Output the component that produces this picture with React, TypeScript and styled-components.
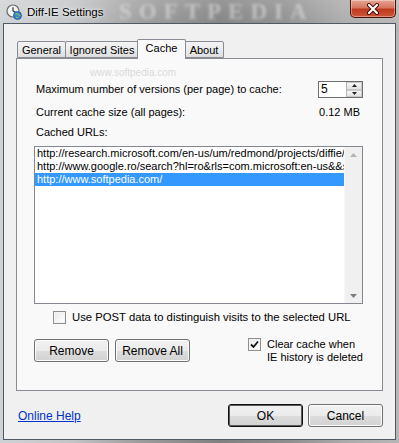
import styled, { createGlobalStyle } from "styled-components";

const GlobalStyle = createGlobalStyle`
  html, body { margin: 0; padding: 0; background: #9a9a9a; }
  body {
    font-family: "Liberation Sans", Arial, sans-serif;
    font-size: 11px;
    color: #000;
  }
  #root { width: 399px; height: 443px; }
`;

const Frame = styled.div`
  width: 399px;
  height: 443px;
  box-sizing: border-box;
  padding: 0 3px 3px 3px;
  display: flex;
  flex-direction: column;
  overflow: hidden;
  background:
    linear-gradient(180deg, rgba(255, 255, 255, 0.18), rgba(255, 255, 255, 0) 30px),
    linear-gradient(90deg, #cfd2d5 0%, #c3c4c6 18%, #9c9c9c 35%, #808080 55%, #8e8e8e 72%, #aaaaaa 86%, #b6b6b6 100%);
`;

const TitleBar = styled.div`
  position: relative;
  height: 23px;
  flex-shrink: 0;
  display: flex;
  align-items: center;
  gap: 5px;
`;

const Watermark = styled.div`
  position: absolute;
  left: 116px;
  top: 1px;
  height: 22px;
  line-height: 22px;
  font-family: "Liberation Serif", serif;
  font-weight: bold;
  font-size: 23px;
  letter-spacing: 7px;
  color: rgba(235, 235, 235, 0.5);
  filter: blur(1.4px);
  pointer-events: none;
`;

const TitleText = styled.span`
  position: relative;
  font-size: 11.5px;
  color: #000;
  text-shadow: 0 0 6px rgba(255, 255, 255, 0.9), 0 0 3px rgba(255, 255, 255, 0.8);
`;

const CloseButton = styled.div`
  position: relative;
  margin-left: auto;
  align-self: flex-start;
  width: 46px;
  height: 18px;
  box-sizing: border-box;
  border: 1px solid #4a1208;
  border-top: none;
  border-radius: 0 0 5px 5px;
  background: linear-gradient(180deg, #e6a696 0%, #d7765f 45%, #be3a1e 55%, #cf5637 100%);
  box-shadow: inset 0 0 0 1px rgba(255, 255, 255, 0.35);
  display: flex;
  align-items: center;
  justify-content: center;
`;

const Client = styled.div`
  flex: 1;
  background: #f0f0f0;
  border: 1px solid #4f5a66;
  display: flex;
  flex-direction: column;
  padding: 15px 12px 0 12px;
`;

const TabStrip = styled.div`
  display: flex;
  align-items: flex-end;
  height: 19px;
  padding-left: 1px;
  position: relative;
  z-index: 1;
`;

const Tab = styled.div<{ $active?: boolean; $w: number; $ml: number }>`
  box-sizing: border-box;
  width: ${(p) => p.$w}px;
  height: ${(p) => (p.$active ? 20 : 17)}px;
  margin-left: ${(p) => p.$ml}px;
  margin-bottom: ${(p) => (p.$active ? -1 : 0)}px;
  border: 1px solid #898c95;
  border-bottom: ${(p) => (p.$active ? "none" : "1px solid #898c95")};
  border-radius: 2px 2px 0 0;
  background: ${(p) =>
    p.$active ? "#f9f9f9" : "linear-gradient(180deg, #f4f4f4 0%, #ebebeb 50%, #dedede 100%)"};
  position: relative;
  z-index: ${(p) => (p.$active ? 2 : 1)};
  display: flex;
  align-items: ${(p) => (p.$active ? "flex-start" : "center")};
  padding-top: ${(p) => (p.$active ? 2 : 0)}px;
  justify-content: center;
  white-space: nowrap;
`;

const Panel = styled.div`
  position: relative;
  height: 333px;
  box-sizing: border-box;
  background: #f9f9f9;
  border: 1px solid #898c95;
  padding: 22px 19px 0 17px;
  display: flex;
  flex-direction: column;
`;

const PanelMark = styled.div`
  position: absolute;
  left: 73px;
  top: 8px;
  font-size: 10px;
  color: #dadada;
  pointer-events: none;
`;

const Row = styled.div<{ $mt: number; $h: number; $pr?: number }>`
  display: flex;
  align-items: center;
  justify-content: space-between;
  margin-top: ${(p) => p.$mt}px;
  height: ${(p) => p.$h}px;
  line-height: 13px;
  padding-left: 2px;
  padding-right: ${(p) => p.$pr ?? 0}px;
`;

const SpinBox = styled.div`
  display: flex;
  width: 45px;
  height: 17px;
  box-sizing: border-box;
  border: 1px solid #6e6e6e;
  background: #fff;
`;

const SpinValue = styled.div`
  flex: 1;
  padding-left: 2px;
  font-size: 12px;
  line-height: 15px;
`;

const SpinButtons = styled.div`
  width: 15px;
  display: flex;
  flex-direction: column;
  border-left: 1px solid #b5b5b5;
`;

const SpinHalf = styled.div`
  flex: 1;
  display: flex;
  align-items: center;
  justify-content: center;
  background: linear-gradient(180deg, #f7f7f7, #e2e2e2);
  border: 1px solid #c9c9c9;
  border-left: none;
`;

const ListBox = styled.div`
  margin-top: 7px;
  height: 158px;
  box-sizing: border-box;
  border: 1px solid #828790;
  background: #fff;
  display: flex;
`;

const ListItems = styled.div`
  flex: 1;
  min-width: 0;
  overflow: hidden;
`;

const ListItem = styled.div<{ $selected?: boolean }>`
  height: 13px;
  line-height: 13px;
  padding-left: 2px;
  white-space: nowrap;
  overflow: hidden;
  font-size: 11px;
  color: ${(p) => (p.$selected ? "#fff" : "#000")};
  background: ${(p) => (p.$selected ? "#3399ff" : "transparent")};
`;

const ScrollBar = styled.div`
  width: 17px;
  background: #f0f0f0;
  border-left: 1px solid #f7f7f7;
  display: flex;
  flex-direction: column;
  justify-content: space-between;
  align-items: center;
  padding: 6px 0 5px;
`;

const CheckRow = styled.label<{ $mt: number; $pl: number; $fs?: number }>`
  display: flex;
  align-items: flex-start;
  gap: 6px;
  margin-top: ${(p) => p.$mt}px;
  padding-left: ${(p) => p.$pl}px;
  line-height: 13px;
  font-size: ${(p) => p.$fs ?? 11}px;
`;

const Box = styled.span`
  width: 13px;
  height: 13px;
  box-sizing: border-box;
  border: 1px solid #8e8f8f;
  background: linear-gradient(135deg, #e9e9e9 0%, #ffffff 100%);
  box-shadow: inset 0 0 0 1px #f4f4f4;
  display: flex;
  align-items: center;
  justify-content: center;
  flex-shrink: 0;
`;

const ButtonRow = styled.div`
  display: flex;
  align-items: flex-start;
  margin-top: 15px;
`;

const Button = styled.button<{ $default?: boolean; $ml?: number }>`
  width: 75px;
  height: 23px;
  box-sizing: border-box;
  margin: 0 0 0 ${(p) => p.$ml ?? 0}px;
  padding: 0;
  font-family: "Liberation Sans", Arial, sans-serif;
  font-size: 12px;
  color: #000;
  border: 1px solid ${(p) => (p.$default ? "#101010" : "#707070")};
  border-radius: 3px;
  background: linear-gradient(180deg, #f2f2f2 0%, #ebebeb 50%, #dddddd 51%, #d2d2d2 100%);
  box-shadow: inset 0 0 0 1px ${(p) => (p.$default ? "#5a5a5a" : "#fbfbfb")};
`;

const BottomRow = styled.div`
  display: flex;
  align-items: center;
  margin-top: 13px;
  height: 23px;
  padding-left: 2px;
`;

const HelpLink = styled.a`
  color: #0033cc;
  text-decoration: underline;
  font-size: 12px;
  margin-right: auto;
`;

const urls = [
  "http://research.microsoft.com/en-us/um/redmond/projects/diffie/",
  "http://www.google.ro/search?hl=ro&rls=com.microsoft:en-us&&sa=X",
  "http://www.softpedia.com/",
];

function AppIcon() {
  return (
    <svg width="16" height="16" viewBox="0 0 16 16" style={{ marginLeft: 3 }}>
      <circle cx="7" cy="7" r="6" fill="#f4f4f4" stroke="#6a6a6a" strokeWidth="1.2" />
      <path d="M7 3.2V7L9.6 8.4" stroke="#333" strokeWidth="1.2" fill="none" />
      <circle cx="11.5" cy="11.5" r="4" fill="#3b82d6" stroke="#1f4f9a" strokeWidth="0.8" />
      <path d="M9.2 10.2c1-.8 2-.6 2.6.2.5.7 1.6.4 2.4 1.2M10 13.6c.7-.6 1.6-.3 2 .3" stroke="#7ccf4a" strokeWidth="1.1" fill="none" />
    </svg>
  );
}

function CloseGlyph() {
  return (
    <svg width="14" height="12" viewBox="0 0 14 12">
      <path d="M3 2L11 10M11 2L3 10" stroke="#3a0a02" strokeWidth="4" strokeLinecap="round" />
      <path d="M3 2L11 10M11 2L3 10" stroke="#ffffff" strokeWidth="2.2" strokeLinecap="round" />
    </svg>
  );
}

function Arrow({ dir, color, size }: { dir: "up" | "down"; color: string; size: number }) {
  const h = Math.ceil(size / 2);
  return (
    <svg width={size} height={h} viewBox={`0 0 ${size} ${h}`}>
      <polygon
        points={dir === "up" ? `0,${h} ${size / 2},0 ${size},${h}` : `0,0 ${size / 2},${h} ${size},0`}
        fill={color}
      />
    </svg>
  );
}

function Check() {
  return (
    <svg width="9" height="9" viewBox="0 0 9 9">
      <path d="M1 4.5L3.5 7L8 1.5" stroke="#111" strokeWidth="1.8" fill="none" />
    </svg>
  );
}

export default function App() {
  return (
    <>
      <GlobalStyle />
      <Frame>
        <TitleBar>
          <Watermark>SOFTPEDIA</Watermark>
          <AppIcon />
          <TitleText>Diff-IE Settings</TitleText>
          <CloseButton>
            <CloseGlyph />
          </CloseButton>
        </TitleBar>
        <Client>
          <TabStrip>
            <Tab $w={49} $ml={0}>General</Tab>
            <Tab $w={74} $ml={-1}>Ignored Sites</Tab>
            <Tab $w={49} $ml={-2} $active>Cache</Tab>
            <Tab $w={40} $ml={-2}>About</Tab>
          </TabStrip>
          <Panel>
            <PanelMark>www.softpedia.com</PanelMark>
            <Row $mt={0} $h={17}>
              <span>Maximum number of versions (per page) to cache:</span>
              <SpinBox>
                <SpinValue>5</SpinValue>
                <SpinButtons>
                  <SpinHalf>
                    <Arrow dir="up" color="#222" size={5} />
                  </SpinHalf>
                  <SpinHalf>
                    <Arrow dir="down" color="#222" size={5} />
                  </SpinHalf>
                </SpinButtons>
              </SpinBox>
            </Row>
            <Row $mt={8} $h={13} $pr={3}>
              <span>Current cache size (all pages):</span>
              <span>0.12 MB</span>
            </Row>
            <Row $mt={7} $h={13}>
              <span>Cached URLs:</span>
            </Row>
            <ListBox>
              <ListItems>
                {urls.map((u, i) => (
                  <ListItem key={u} $selected={i === 2}>
                    {u}
                  </ListItem>
                ))}
              </ListItems>
              <ScrollBar>
                <Arrow dir="up" color="#b4b4b4" size={7} />
                <Arrow dir="down" color="#7d7d7d" size={7} />
              </ScrollBar>
            </ListBox>
            <CheckRow $mt={7} $pl={19} $fs={11.3}>
              <Box />
              <span>Use POST data to distinguish visits to the selected URL</span>
            </CheckRow>
            <ButtonRow>
              <Button>Remove</Button>
              <Button $ml={6}>Remove All</Button>
              <CheckRow $mt={-1} $pl={58}>
                <Box>
                  <Check />
                </Box>
                <div>
                  Clear cache when
                  <br />
                  IE history is deleted
                </div>
              </CheckRow>
            </ButtonRow>
          </Panel>
          <BottomRow>
            <HelpLink href="#">Online Help</HelpLink>
            <Button $default>OK</Button>
            <Button $ml={5}>Cancel</Button>
          </BottomRow>
        </Client>
      </Frame>
    </>
  );
}
